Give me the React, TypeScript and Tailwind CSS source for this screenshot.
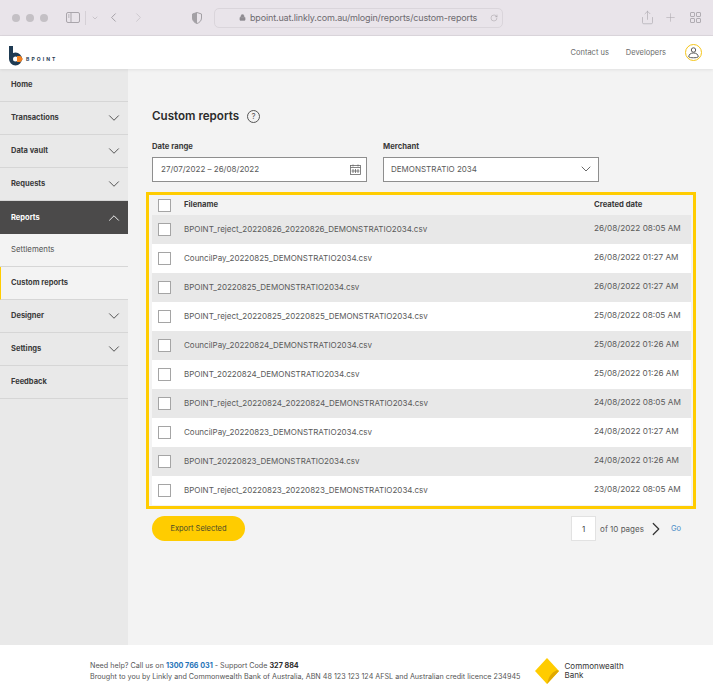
import { ChevronDown, ChevronLeft, ChevronRight, ChevronUp, Lock, Plus, RotateCw, Share } from "lucide-react";

const rows = [
  ["BPOINT_reject_20220826_20220826_DEMONSTRATIO2034.csv", "26/08/2022 08:05 AM"],
  ["CouncilPay_20220825_DEMONSTRATIO2034.csv", "26/08/2022 01:27 AM"],
  ["BPOINT_20220825_DEMONSTRATIO2034.csv", "26/08/2022 01:27 AM"],
  ["BPOINT_reject_20220825_20220825_DEMONSTRATIO2034.csv", "25/08/2022 08:05 AM"],
  ["CouncilPay_20220824_DEMONSTRATIO2034.csv", "25/08/2022 01:26 AM"],
  ["BPOINT_20220824_DEMONSTRATIO2034.csv", "25/08/2022 01:26 AM"],
  ["BPOINT_reject_20220824_20220824_DEMONSTRATIO2034.csv", "24/08/2022 08:05 AM"],
  ["CouncilPay_20220823_DEMONSTRATIO2034.csv", "24/08/2022 01:27 AM"],
  ["BPOINT_20220823_DEMONSTRATIO2034.csv", "24/08/2022 01:26 AM"],
  ["BPOINT_reject_20220823_20220823_DEMONSTRATIO2034.csv", "23/08/2022 08:05 AM"],
];

const nav = [
  { label: "Home" },
  { label: "Transactions", chevron: true },
  { label: "Data vault", chevron: true },
  { label: "Requests", chevron: true },
];

const navBottom = [
  { label: "Designer", chevron: true },
  { label: "Settings", chevron: true },
  { label: "Feedback" },
];

function NavItem({ label, chevron }: { label: string; chevron?: boolean }) {
  return (
    <div className="flex h-[33px] items-center justify-between border-b border-[#d6d6d6] pl-[11px] pr-[5px] text-[7.5px] font-bold text-[#3a3a3a]">
      <span>{label}</span>
      {chevron && <ChevronDown size={18} strokeWidth={1.2} className="text-[#444]" />}
    </div>
  );
}

function Checkbox() {
  return <div className="h-[13px] w-[13px] shrink-0 border border-[#a5a5a5] bg-white" />;
}

export default function App() {
  return (
    <div className="flex h-[692px] w-[713px] flex-col overflow-hidden bg-[#f3f3f3] font-['Inter',sans-serif]">
      {/* safari toolbar */}
      <div className="relative flex h-[36px] shrink-0 items-center border-b border-[#dcd7dd] bg-[#e9e4ea] text-[#b0acb2]">
        <div className="ml-[12px] flex gap-[6px]">
          <div className="h-[8px] w-[8px] rounded-full bg-[#c4c0c5]" />
          <div className="h-[8px] w-[8px] rounded-full bg-[#c4c0c5]" />
          <div className="h-[8px] w-[8px] rounded-full bg-[#c4c0c5]" />
        </div>
        <svg width="14" height="11" viewBox="0 0 14 11" className="ml-[18px]" fill="none" stroke="#a9a5ab" strokeWidth="1">
          <rect x="0.5" y="0.5" width="13" height="10" rx="1.5" />
          <path d="M5 .5v10M2 3h1.5M2 5h1.5" />
        </svg>
        <div className="ml-[5px] h-[14px] w-px bg-[#d5d0d6]" />
        <ChevronDown size={8} strokeWidth={1.5} className="ml-[5px] text-[#a9a5ab]" />
        <ChevronLeft size={15} strokeWidth={1.2} className="ml-[7px] text-[#8f8b91]" />
        <ChevronRight size={15} strokeWidth={1.2} className="ml-[10px] text-[#c4c0c6]" />
        <svg width="10" height="12" viewBox="0 0 10 12" className="ml-[46px]">
          <path d="M5 .5 9.5 2v4c0 3-2.2 4.7-4.5 5.5C2.700 10.700.5 9 .5 6V2z" fill="none" stroke="#a3a0a5" />
          <path d="M5 .5 .5 2v4C.5 9 2.700 10.700 5 11.500z" fill="#a3a0a5" />
        </svg>
        <div className="ml-[12px] flex h-[20px] w-[289px] items-center justify-between rounded-[5px] border border-[#dad5db] pl-[24px] pr-[4px] text-[9px] tracking-[-0.15px] text-[#6e6b70]">
          <span className="flex items-center gap-[4px]">
            <Lock size={7} fill="#8f8b91" strokeWidth={1.500} className="text-[#8f8b91]" />
            <span className="whitespace-nowrap">bpoint.uat.linkly.com.au/mlogin/reports/custom-reports</span>
          </span>
          <RotateCw size={8} strokeWidth={1.2} className="text-[#8f8b91]" />
        </div>
        <Share size={15} strokeWidth={1} className="ml-[137px] text-[#a9a5ab]" />
        <Plus size={13} strokeWidth={1} className="ml-[9px] text-[#a9a5ab]" />
        <div className="ml-[13px] grid grid-cols-2 gap-[1px]">
          <div className="h-[5px] w-[5px] rounded-[1px] border border-[#b0acb2]" />
          <div className="h-[5px] w-[5px] rounded-[1px] border border-[#b0acb2]" />
          <div className="h-[5px] w-[5px] rounded-[1px] border border-[#b0acb2]" />
          <div className="h-[5px] w-[5px] rounded-[1px] border border-[#b0acb2]" />
        </div>
      </div>

      {/* app header */}
      <div className="z-10 flex h-[33px] shrink-0 items-center justify-between bg-white pl-[9px] pr-[11px] shadow-[0_1px_3px_rgba(0,0,0,0.08)]">
        <div className="flex items-end">
          <svg width="15" height="20" viewBox="0 0 15 20" className="mt-[6px]">
            <path d="M2 0v13" fill="none" stroke="#1f3b53" strokeWidth="4" />
            <circle cx="6.500" cy="13" r="4.500" fill="none" stroke="#1f3b53" strokeWidth="4" />
            <path d="M8 10h3.500l2.500 3-2.500 3H8z" fill="#f58220" />
          </svg>
          <span className="mb-[2px] ml-[2px] text-[5px] font-bold tracking-[0.42em] text-[#1f3b53]">BPOINT</span>
        </div>
        <div className="flex items-center text-[7.5px] text-[#6b6b6b]">
          <span>Contact us</span>
          <span className="ml-[17px]">Developers</span>
          <div className="ml-[19px] flex h-[17px] w-[17px] items-center justify-center rounded-full border-[1.5px] border-[#f5c518]">
            <svg width="13" height="13" viewBox="0 0 13 13" fill="none" stroke="#5a5a5a" strokeWidth="1">
              <circle cx="6.500" cy="4" r="2.200" />
              <path d="M1.800 11c0-2.800 2-4 4.700-4s4.700 1.200 4.700 4c-1 1-8.400 1-9.400 0z" />
            </svg>
          </div>
        </div>
      </div>

      <div className="flex min-h-0 flex-1">
        {/* sidebar */}
        <aside className="w-[128px] shrink-0 bg-[#e9e9e9]">
          {nav.map((item) => (
            <NavItem key={item.label} {...item} />
          ))}
          <div className="flex h-[33px] items-center justify-between bg-[#4b4a4a] pl-[11px] pr-[5px] text-[7.5px] font-bold text-white">
            <span>Reports</span>
            <ChevronUp size={18} strokeWidth={1.2} />
          </div>
          <div className="flex h-[33px] items-center border-b border-[#d6d6d6] bg-[#f3f3f3] pl-[11px] text-[7.8px] text-[#555]">
            Settlements
          </div>
          <div className="flex h-[33px] items-center border-b border-l-[1px] border-[#d6d6d6] border-l-[#ffcc00] bg-[#f3f3f3] pl-[10px] text-[7.5px] font-bold text-[#3a3a3a]">
            Custom reports
          </div>
          {navBottom.map((item) => (
            <NavItem key={item.label} {...item} />
          ))}
        </aside>

        {/* main */}
        <main className="min-w-0 flex-1 pl-[18px] pr-[17px]">
          <div className="ml-[6px] mt-[40px] flex items-center gap-[8px]">
            <h1 className="text-[11.6px] leading-[14px] font-semibold text-[#2b2b2b]">Custom reports</h1>
            <div className="flex h-[13px] w-[13px] items-center justify-center rounded-full border border-[#555] text-[8px] text-[#555]">
              ?
            </div>
          </div>

          <div className="ml-[6px] mt-[19px] flex gap-[16px]">
            <div>
              <div className="text-[7.7px] leading-[10px] font-bold text-[#3a3a3a]">Date range</div>
              <div className="mt-[5px] flex h-[25px] w-[215px] items-center justify-between border border-[#8e8e8e] bg-white pb-[1px] pl-[8px] pr-[5px] text-[8px] text-[#5a5a5a]">
                <span>27/07/2022 – 26/08/2022</span>
                <svg width="11" height="11" viewBox="0 0 11 11" fill="none" stroke="#666" strokeWidth="0.8">
                  <rect x="0.5" y="1.500" width="10" height="9" />
                  <path d="M0.500 3.500h10M3 .5v2M8 .5v2M3 5v4M5.500 5v4M8 5v4M1.500 7h8" />
                </svg>
              </div>
            </div>
            <div>
              <div className="text-[7.7px] leading-[10px] font-bold text-[#3a3a3a]">Merchant</div>
              <div className="mt-[5px] flex h-[25px] w-[216px] items-center justify-between border border-[#8e8e8e] bg-white pb-[1px] pl-[7px] pr-[4px] text-[8px] text-[#5a5a5a]">
                <span>DEMONSTRATIO 2034</span>
                <ChevronDown size={16} strokeWidth={1.2} className="text-[#444]" />
              </div>
            </div>
          </div>

          {/* highlighted table */}
          <div className="mt-[10px] w-[550px] border-[3px] border-[#ffcc00] pb-[1px] pl-[3px] pr-[2px]">
            <div className="flex h-[20px] items-center pl-[6px] pr-[10px] text-[7.7px] font-bold text-[#3a3a3a]">
              <Checkbox />
              <span className="ml-[13px]">Filename</span>
              <span className="ml-auto w-[87px]">Created date</span>
            </div>
            {rows.map(([name, date], i) => (
              <div
                key={name}
                className={`flex h-[29px] items-center pl-[6px] pr-[10px] text-[8px] text-[#5a5a5a] ${i % 2 === 0 ? "bg-[#e8e8e8]" : "bg-white"}`}
              >
                <Checkbox />
                <span className="ml-[13px] pb-[2px]">{name}</span>
                <span className="ml-auto w-[87px] whitespace-nowrap pb-[2px] text-[8.2px]">{date}</span>
              </div>
            ))}
          </div>

          <div className="ml-[6px] mt-[7px] flex w-[539px] items-center justify-between">
            <button className="h-[25px] w-[93px] rounded-full bg-[#ffcc00] text-[7.5px] text-[#4a4a2a]">Export Selected</button>
            <div className="flex items-center pr-[10px]">
              <div className="flex h-[25px] w-[25px] items-center justify-center border border-[#e2e2e2] bg-white text-[8px] text-[#444]">
                1
              </div>
              <span className="ml-[4px] text-[8px] text-[#5a5a5a]">of 10 pages</span>
              <ChevronRight size={22} strokeWidth={1.3} className="ml-[1px] text-[#333]" />
              <span className="ml-[4px] pt-[1px] text-[7.5px] text-[#4a8cc7]">Go</span>
            </div>
          </div>
        </main>
      </div>

      {/* footer */}
      <div className="flex h-[47px] shrink-0 items-center bg-white pl-[90px] pt-[4px]">
        <div className="text-[7.2px] leading-[11px] text-[#555]">
          <div>
            Need help? Call us on <b className="font-bold text-[#1f73b7]">1300 766 031</b> - Support Code{" "}
            <b className="font-bold text-[#2b2b2b]">327 884</b>
          </div>
          <div className="whitespace-nowrap">
            Brought to you by Linkly and Commonwealth Bank of Australia, ABN 48 123 123 124 AFSL and Australian credit licence 234945
          </div>
        </div>
        <svg width="24" height="26" viewBox="0 0 24 26" className="ml-[15px] shrink-0">
          <path d="M12 0 24 13 12 26 0 13z" fill="#ffcc00" />
          <path d="M12 26C14 18 16 15 22 12l2 1z" fill="#e0a800" />
        </svg>
        <div className="ml-[5px] text-[8px] leading-[9px] text-[#333]">
          Commonwealth
          <br />
          Bank
        </div>
      </div>
    </div>
  );
}
